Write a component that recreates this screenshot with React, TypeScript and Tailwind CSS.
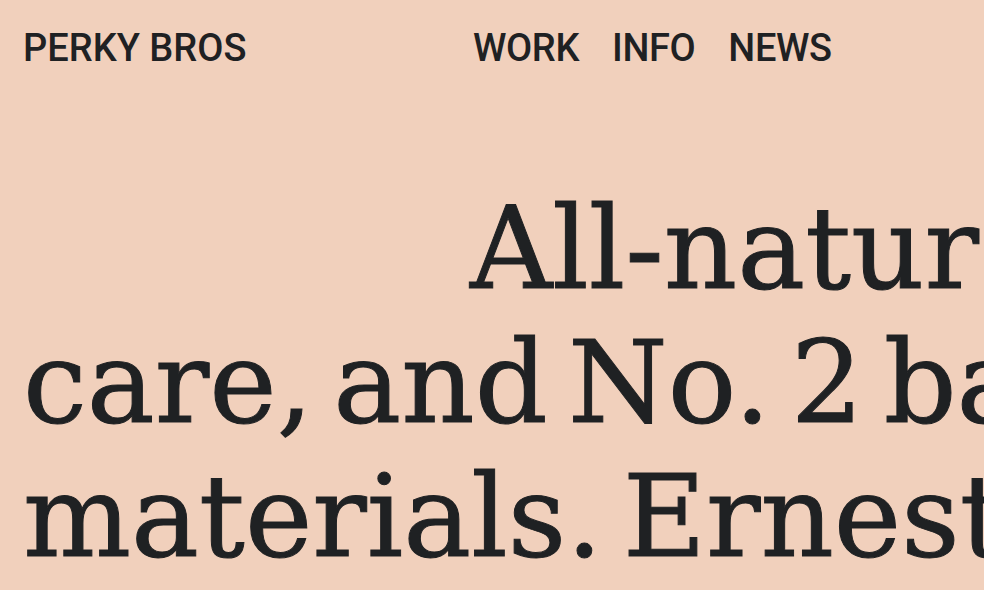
export default function App() {
  const navItems = ['WORK', 'INFO', 'NEWS'];

  return (
    <div className="min-h-[590px] w-full overflow-hidden bg-[#f1d0bc] text-[#1f2123]">
      <header className="grid grid-cols-[450px_1fr] px-[23px] pt-[29px]">
        <a className="font-['Roboto',sans-serif] text-[38px] font-medium leading-none">PERKY BROS</a>
        <nav className="flex gap-[33px] font-['Roboto',sans-serif] text-[38px] font-medium leading-none tracking-[-0.01em]">
          {navItems.map((item) => (
            <a key={item}>{item}</a>
          ))}
        </nav>
      </header>

      <main className="mt-[115px] px-[23px]">
        <p className="whitespace-nowrap font-['DejaVu_Serif',serif] text-[114px] leading-[134px] [word-spacing:-0.14em] [-webkit-text-stroke:1px_#1f2123]">
          <span className="block pl-[447px]">All-natural personal</span>
          <span className="block">care, and No. 2 bathroom</span>
          <span className="block">materials. Ernest</span>
        </p>
      </main>
    </div>
  );
}
